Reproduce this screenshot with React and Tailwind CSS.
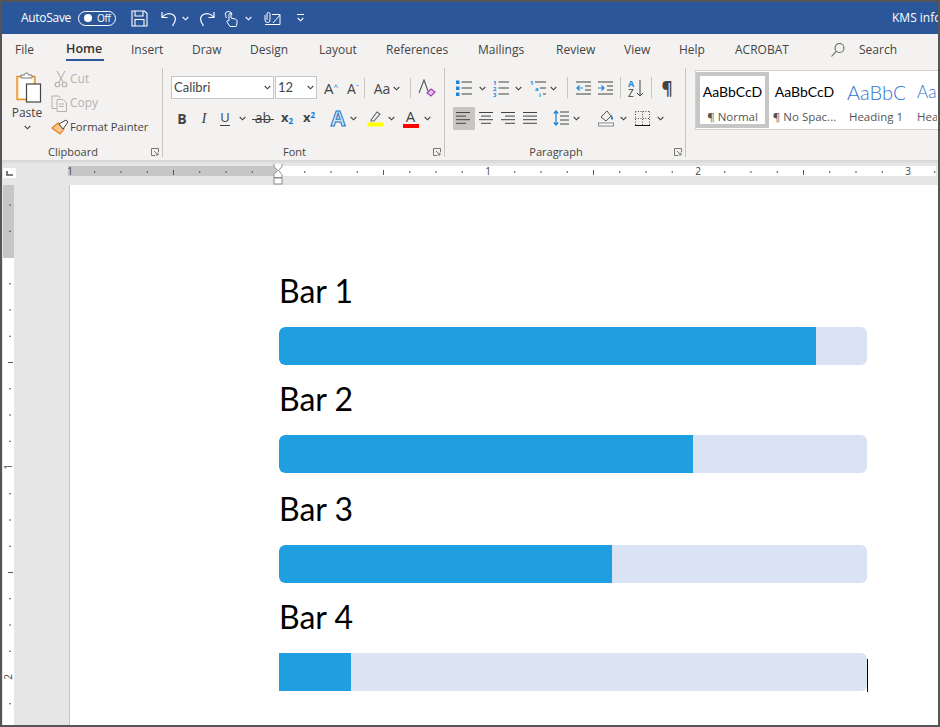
import React from 'react';

const UI = "font-['Open_Sans','Noto_Sans',sans-serif]";
const DOC = "font-['Lato','Liberation_Sans',sans-serif]";

const Chevron = ({ color = '#444', className = '' }) => (
  <svg width="7" height="5" viewBox="0 0 7 5" className={className}>
    <path d="M.7 1l2.8 2.8L6.3 1" fill="none" stroke={color} strokeWidth="1.1" />
  </svg>
);

const Sep = ({ className = 'h-[22px]' }) => <div className={`w-px shrink-0 bg-[#c8c6c4] ${className}`} />;

// fixed-width slot so that the ribbon buttons stay on the grid of the original
const Slot = ({ className = 'w-[22px]', children }) => (
  <div className={`flex h-[22px] shrink-0 items-center justify-center ${className}`}>{children}</div>
);

const TitleBar = () => (
  <div className={`flex h-[32px] shrink-0 items-center bg-[#2b579a] text-white ${UI}`}>
    <span className="ml-[19px] w-[57px] whitespace-nowrap text-[12px] tracking-[-0.3px]">AutoSave</span>
    <div className="flex h-[15px] w-[38px] items-center rounded-full border border-white pl-[5px]">
      <div className="h-[8px] w-[8px] rounded-full bg-white" />
      <span className="ml-[5px] text-[10px] leading-none tracking-[-0.3px]">Off</span>
    </div>
    <svg width="17" height="17" viewBox="0 0 17 17" className="ml-[15px]" fill="none" stroke="#fff" strokeWidth="1.1">
      <path d="M1 1h12.5L16 3.5V16H1z" /><path d="M4 1v5h8V1M4 16v-6.500h9V16" />
    </svg>
    <svg width="17" height="17" viewBox="0 0 17 17" className="ml-[13px]" fill="none" stroke="#fff" strokeWidth="1.2">
      <path d="M1 2v5.500h5.500M1.500 7C4 3.500 9 2.500 12.500 5c3 2.500 2.500 6-1 11" />
    </svg>
    <Chevron color="#fff" className="ml-[4px]" />
    <svg width="17" height="17" viewBox="0 0 17 17" className="ml-[9px]" fill="none" stroke="#fff" strokeWidth="1.2">
      <path d="M16 2v5.500h-5.500M15.500 7C13 3.500 8 2.500 4.500 5c-3 2.500-2.500 6 1 11" />
    </svg>
    <svg width="14" height="18" viewBox="0 0 14 18" className="ml-[9px]" fill="none" stroke="#fff" strokeWidth="1">
      <path d="M1 6a3.500 3.500 0 0 1 7 0M2.500 9a3 3 0 0 1-.5-3M5 11V5.500a1 1 0 0 1 2 0V9l4.500 1.200c1 .3 1.500 1 1.500 2V15l-1 2.500H6L3 13c-.5-1 .8-2 1.800-1.200z" />
    </svg>
    <Chevron color="#fff" className="ml-[7px]" />
    <svg width="17" height="15" viewBox="0 0 17 15" className="ml-[12px]" fill="none" stroke="#fff" strokeWidth="1">
      <path d="M1 13.500h15V3.500H8M9 12l7-8M3 9V3a1.500 1.500 0 0 1 3 0v6a2.500 2.500 0 0 1-5 0V4" />
    </svg>
    <div className="ml-[16px] flex flex-col items-center gap-[2px]">
      <div className="h-px w-[7px] bg-white" />
      <Chevron color="#fff" />
    </div>
    <span className="ml-auto mr-0 w-[46px] overflow-hidden whitespace-nowrap text-[12px]">KMS info</span>
  </div>
);

const tabs = [
  ['File', 'w-[51px]'],
  ['Home', 'w-[65px]'],
  ['Insert', 'w-[61px]'],
  ['Draw', 'w-[58px]'],
  ['Design', 'w-[69px]'],
  ['Layout', 'w-[67px]'],
  ['References', 'w-[92px]'],
  ['Mailings', 'w-[78px]'],
  ['Review', 'w-[68px]'],
  ['View', 'w-[55px]'],
  ['Help', 'w-[56px]'],
  ['ACROBAT', 'w-[95px]'],
];

const Tabs = () => (
  <div className={`flex h-[31px] shrink-0 bg-[#f3f2f1] pl-[13px] text-[12px] text-[#444] ${UI}`}>
    {tabs.map(([name, w]) => (
      <div key={name} className={`relative flex items-center whitespace-nowrap ${w}`}>
        {name === 'Home' ? (
          <>
            <span className="text-[12.500px] font-semibold text-[#333]">{name}</span>
            <div className="absolute bottom-[4px] left-0 h-[2px] w-[38px] bg-[#2b579a]" />
          </>
        ) : (
          name
        )}
      </div>
    ))}
    <div className="flex items-center">
      <svg width="16" height="16" viewBox="0 0 16 16" fill="none" stroke="#666" strokeWidth="1.1">
        <circle cx="9.500" cy="6" r="4.500" /><path d="M6.200 9.300L1.500 14.500" />
      </svg>
      <span className="ml-[13px]">Search</span>
    </div>
  </div>
);

const Group = ({ label, className, children }) => (
  <div className={`flex shrink-0 flex-col self-start border-r border-[#c8c6c4] ${className}`}>
    <div className="h-[74px]">{children}</div>
    <div className={`relative mt-[5px] pr-[18px] text-center text-[11px] leading-[10px] text-[#444] ${UI}`}>
      {label}
      <svg width="8" height="8" viewBox="0 0 8 8" className="absolute right-[3px] top-[1px]" fill="none" stroke="#777" strokeWidth="1">
        <path d="M7.500 4V.5H.5v7H4M3 3l4 4M7 4.500V7H4.500" />
      </svg>
    </div>
  </div>
);

const Clipboard = () => (
  <Group label="Clipboard" className="w-[161px]">
    <div className={`flex text-[12px] ${UI}`}>
      <div className="ml-[9px] flex w-[32px] flex-col items-center text-[#444]">
        <svg width="30" height="32" viewBox="0 0 30 32" className="mt-[4px]">
          <rect x="5" y="4.500" width="18" height="23" fill="#fde5b8" stroke="#e88a1a" strokeWidth="1.300" />
          <rect x="7" y="6" width="14" height="20" fill="#fff" />
          <path d="M9 6V3h3.500a2 2 0 0 1 4 0H20v3z" fill="#fff" stroke="#777" />
          <rect x="14.500" y="12" width="14" height="18" fill="#fff" stroke="#444" strokeWidth="1.200" />
        </svg>
        <span className="mt-[1px] leading-[16px]">Paste</span>
        <Chevron className="mt-[4px]" />
      </div>
      <div className="ml-[8px] -mt-px flex flex-col">
        <div className="flex h-[24px] items-center text-[#b4b2b0]">
          <svg width="16" height="18" viewBox="0 0 16 18" className="ml-[2px]" fill="none" stroke="#b4b2b0" strokeWidth="1.100">
            <path d="M4 1l6 11M12 1L6 12" /><circle cx="4.500" cy="14.500" r="2.300" /><circle cx="11.500" cy="14.500" r="2.300" />
          </svg>
          <span className="ml-px">Cut</span>
        </div>
        <div className="flex h-[24px] items-center text-[#b4b2b0]">
          <svg width="18" height="17" viewBox="0 0 18 17" fill="none" stroke="#b4b2b0" strokeWidth="1">
            <path d="M5.500 13.500H1V1h7l1.500 2M6 4.500h6l3.500 3.500v8.500H6zM8 9h5M8 11.500h5" />
          </svg>
          <span className="ml-px">Copy</span>
        </div>
        <div className="flex h-[24px] items-center whitespace-nowrap text-[#444]">
          <svg width="18" height="16" viewBox="0 0 18 16">
            <path d="M1 9l6-5 6 6-4 5z" fill="#fbc58a" stroke="#e07b1a" strokeWidth="1.200" />
            <path d="M8 5l7-4 2 2-5 7z" fill="#fff" stroke="#444" />
          </svg>
          <span className="ml-px text-[11.250px]">Format Painter</span>
        </div>
      </div>
    </div>
  </Group>
);

const FontGroup = () => (
  <Group label="Font" className="w-[282px]">
    <div className={`flex h-[31px] items-end pl-[8px] text-[#444] ${UI}`}>
      <div className="flex h-[23px] w-[103px] items-center justify-between border border-[#c8c6c4] bg-white pl-[2px] pr-[2px] text-[13px]">
        <span className={DOC}>Calibri</span><Chevron />
      </div>
      <div className="ml-px flex h-[23px] w-[42px] items-center justify-between border border-[#c8c6c4] bg-white pl-[2px] pr-[2px] text-[13px]">
        <span className={DOC}>12</span><Chevron />
      </div>
      <Slot className="ml-[3px] w-[22px]"><span className="text-[15px]">A<sup className="text-[8px] text-[#0078d4]">^</sup></span></Slot>
      <Slot className="w-[22px]"><span className="text-[14px]">A<sup className="text-[8px] text-[#0078d4]">ˇ</sup></span></Slot>
      <Sep className="mt-[8px] h-[20px] self-center" />
      <Slot className="ml-[7px] w-[30px]"><span className="text-[14px]">Aa</span><Chevron className="ml-[3px]" /></Slot>
      <Sep className="ml-[8px] mt-[8px] h-[20px] self-center" />
      <Slot className="ml-[6px] w-[20px]">
        <svg width="18" height="18" viewBox="0 0 18 18" fill="none">
          <path d="M1 14L6 1l4 11" stroke="#555" strokeWidth="1.100" />
          <path d="M9 14l4-4 4 3-4 4z" fill="#e6c6ee" stroke="#a03fb5" strokeWidth="1.200" />
        </svg>
      </Slot>
    </div>
    <div className={`mt-[7px] flex h-[24px] items-center pl-[8px] text-[#444] ${UI}`}>
      <Slot className="w-[22px]"><span className="text-[14px] font-bold">B</span></Slot>
      <Slot className="w-[22px]"><span className="font-['Liberation_Serif',serif] text-[15px] italic">I</span></Slot>
      <Slot className="w-[20px]"><span className="border-b border-[#444] text-[13px] leading-[15px]">U</span></Slot>
      <Slot className="w-[15px]"><Chevron /></Slot>
      <Slot className="w-[26px]"><span className="relative text-[14px] leading-none">ab<span className="absolute left-[-3px] right-[-3px] top-[8px] h-px bg-[#444]" /></span></Slot>
      <Slot className="w-[22px]"><span className="text-[13px] font-bold">x<sub className="text-[8px] text-[#0078d4]">2</sub></span></Slot>
      <Slot className="w-[22px]"><span className="text-[13px] font-bold">x<sup className="text-[8px] text-[#0078d4]">2</sup></span></Slot>
      <Sep className="ml-[2px]" />
      <Slot className="ml-[5px] w-[20px]">
        <span className="text-[21px] font-bold leading-none text-[#cfe5f7] [-webkit-text-stroke:1px_#1f78c8]">A</span>
      </Slot>
      <Slot className="w-[10px]"><Chevron /></Slot>
      <Slot className="ml-[8px] w-[19px]">
        <svg width="17" height="18" viewBox="0 0 17 18">
          <path d="M4 11l6-8 3 2-6 7H4z" fill="none" stroke="#666" strokeWidth="1.100" />
          <rect x="0.500" y="13.500" width="16" height="4" fill="#ffff00" />
        </svg>
      </Slot>
      <Slot className="w-[12px]"><Chevron /></Slot>
      <Slot className="ml-[5px] w-[17px]">
        <div className="flex flex-col items-center">
          <span className="text-[15px] leading-[14px]">A</span>
          <div className="mt-px h-[4px] w-[16px] bg-[#ff0000]" />
        </div>
      </Slot>
      <Slot className="w-[17px]"><Chevron /></Slot>
    </div>
  </Group>
);

const Lines = ({ rows }) => (
  <svg width="16" height="14" viewBox="0 0 16 14" stroke="#444" strokeWidth="1">
    {rows.map(([a, b], i) => <path key={i} d={`M${a} ${1.5 + i * 3.6}H${b}`} />)}
  </svg>
);

const ListIcon = ({ kind }) => (
  <svg width="17" height="18" viewBox="0 0 17 18" fontFamily="Open Sans" fontWeight="700" fontSize="6" fill="#1f84d6">
    {kind === 'bullet' && [3, 9, 15].map((y) => <rect key={y} x="0" y={y - 1.500} width="3.500" height="3.500" />)}
    {kind === 'number' && ['1', '2', '3'].map((t, i) => <text key={t} x="0" y={5.500 + i * 6}>{t}</text>)}
    {kind === 'multi' && (<>
      <text x="0" y="5.500">1</text>
      <text x="5" y="11.500">a</text>
      <text x="9" y="17.500">i</text>
    </>)}
    {kind === 'multi' ? (
      <path d="M5 3h11M10 9h6M13 15h3" stroke="#444" strokeWidth="1" />
    ) : (
      <path d="M5.500 3H16M5.500 9H16M5.500 15H16" stroke="#444" strokeWidth="1" />
    )}
  </svg>
);

const Indent = ({ dir }) => (
  <svg width="15" height="14" viewBox="0 0 15 14" fill="none">
    <path d="M0 1h15M9 5h6M9 9h6M0 13h15" stroke="#444" />
    <path d={dir === 'out' ? 'M7 7H1M3.500 4.500L1 7l2.500 2.500' : 'M0 7h6M3.500 4.500L6 7 3.500 9.500'} stroke="#1f84d6" strokeWidth="1.200" />
  </svg>
);

const Paragraph = () => (
  <Group label="Paragraph" className="w-[241px]">
    <div className={`flex h-[31px] items-end pl-[10px] ${UI}`}>
      <Slot className="w-[18px]"><ListIcon kind="bullet" /></Slot>
      <Slot className="w-[18px]"><Chevron /></Slot>
      <Slot className="ml-[2px] w-[17px]"><ListIcon kind="number" /></Slot>
      <Slot className="w-[16px]"><Chevron /></Slot>
      <Slot className="ml-[4px] w-[17px]"><ListIcon kind="multi" /></Slot>
      <Slot className="w-[12px]"><Chevron /></Slot>
      <Sep className="ml-[8px] mt-[8px] h-[21px] self-center" />
      <Slot className="ml-[8px] w-[15px]"><Indent dir="out" /></Slot>
      <Slot className="ml-[7px] w-[15px]"><Indent dir="in" /></Slot>
      <Sep className="ml-[7px] mt-[8px] h-[21px] self-center" />
      <Slot className="ml-[7px] w-[16px]">
        <svg width="16" height="19" viewBox="0 0 16 19" fill="none">
          <text x="0" y="8" fontSize="9" fontWeight="700" fill="#1f84d6" fontFamily="Open Sans">A</text>
          <text x="0" y="18" fontSize="10" fill="#444" fontFamily="Open Sans">Z</text>
          <path d="M12 1v16M9 14l3 3 3-3" stroke="#444" />
        </svg>
      </Slot>
      <Sep className="ml-[7px] mt-[8px] h-[21px] self-center" />
      <Slot className="ml-[9px] w-[12px]"><span className="text-[17px] font-bold leading-none text-[#444]">¶</span></Slot>
    </div>
    <div className={`mt-[7px] flex h-[24px] items-center pl-[8px] ${UI}`}>
      <div className="flex h-[23px] w-[22px] items-center justify-center bg-[#c8c6c4]"><Lines rows={[[0, 14], [0, 10], [0, 14], [0, 10]]} /></div>
      <Slot className="w-[22px]"><Lines rows={[[1, 15], [3, 13], [1, 15], [3, 13]]} /></Slot>
      <Slot className="w-[22px]"><Lines rows={[[1, 15], [5, 15], [1, 15], [5, 15]]} /></Slot>
      <Slot className="w-[22px]"><Lines rows={[[1, 15], [1, 15], [1, 15], [1, 15]]} /></Slot>
      <Sep className="ml-[4px]" />
      <Slot className="ml-[7px] w-[16px]">
        <svg width="16" height="16" viewBox="0 0 16 16" fill="none">
          <path d="M3 1v14M.8 3.500L3 1l2.200 2.500M.8 12.500L3 15l2.200-2.500" stroke="#1f84d6" strokeWidth="1.300" />
          <path d="M7 2h9M7 6h9M7 10h9M7 14h9" stroke="#444" />
        </svg>
      </Slot>
      <Slot className="w-[14px]"><Chevron /></Slot>
      <Sep className="ml-[7px]" />
      <Slot className="ml-[7px] w-[16px]">
        <svg width="16" height="18" viewBox="0 0 16 18" fill="none">
          <path d="M3 8l6-6 4 5-5 5z" stroke="#555" />
          <path d="M13 5.500l2 3v2h-2z" fill="#1f84d6" />
          <rect x="0.500" y="14" width="15" height="3" fill="#fff" stroke="#888" />
        </svg>
      </Slot>
      <Slot className="w-[18px]"><Chevron /></Slot>
      <Slot className="ml-[3px] w-[15px]">
        <svg width="15" height="15" viewBox="0 0 15 15" fill="none">
          <path d="M.5 .5h14M.5 7.500h14M.5 .5v14M7.500 .5v14M14.500 .5v14" stroke="#555" strokeDasharray="1 1.500" />
          <path d="M0 14.500h15" stroke="#111" />
        </svg>
      </Slot>
      <Slot className="w-[20px]"><Chevron /></Slot>
    </div>
  </Group>
);

const Styles = () => (
  <div className="ml-[9px] mt-[2px] flex h-[60px] flex-1 overflow-hidden border-y border-l border-[#d2d0ce] bg-white">
    <div className="my-px flex w-[73px] shrink-0 flex-col items-center border-4 border-[#c6c6c6] pt-[6px]">
      <span className={`text-[14px] leading-[20px] text-black ${DOC}`}>AaBbCcD</span>
      <span className={`mt-[7px] text-[11.500px] leading-[16px] text-[#555] ${UI}`}>¶ Normal</span>
    </div>
    <div className="flex w-[71px] shrink-0 flex-col items-center pt-[11px]">
      <span className={`text-[14px] leading-[20px] text-black ${DOC}`}>AaBbCcD</span>
      <span className={`mt-[7px] whitespace-nowrap text-[11.500px] leading-[16px] text-[#555] ${UI}`}>¶ No Spac...</span>
    </div>
    <div className="flex w-[72px] shrink-0 flex-col items-center pt-[9px]">
      <span className={`w-[58px] overflow-hidden whitespace-nowrap text-[20px] font-light leading-[24px] text-[#2f74d0] ${DOC}`}>AaBbCcD</span>
      <span className={`mt-[5px] text-[11.500px] leading-[16px] text-[#555] ${UI}`}>Heading 1</span>
    </div>
    <div className="flex shrink-0 flex-col pl-[5px] pt-[9px]">
      <span className={`w-[20px] overflow-hidden whitespace-nowrap text-[17px] font-light leading-[24px] text-[#2f74d0] ${DOC}`}>AaBbCc</span>
      <span className={`mt-[5px] w-[20px] overflow-hidden whitespace-nowrap text-[11.500px] leading-[16px] text-[#555] ${UI}`}>Heading 2</span>
    </div>
  </div>
);

const Ribbon = () => (
  <div className="flex h-[95px] shrink-0 bg-[#f3f2f1] pt-[3px]">
    <Clipboard />
    <FontGroup />
    <Paragraph />
    <Styles />
  </div>
);

// horizontal ruler: x=0 is the left edge of the band, zero mark at 210
const HRuler = () => {
  const ticks = [];
  for (let i = -7; i <= 25; i++) {
    if (i % 8 === 0) continue;
    const x = 210 + i * 26.25;
    ticks.push(i % 4 === 0
      ? <rect key={i} x={x} y="6" width="1" height="5" fill="#555" />
      : <rect key={i} x={x} y="7" width="1" height="2" fill="#555" />);
  }
  return (
    <svg width="868" height="21" viewBox="0 0 868 21" className="shrink-0">
      <rect x="0" y="2" width="210" height="10" fill="#c6c6c6" />
      <rect x="210" y="2" width="658" height="10" fill="#fff" />
      {ticks}
      {[[2, '1'], [420, '1'], [630, '2'], [840, '3']].map(([x, t]) => (
        <text key={x} x={x} y="11" fontSize="10" textAnchor="middle" fill="#444" fontFamily="Open Sans">{t}</text>
      ))}
      <path d="M206 0h8v3l-3.500 4 3.500 4v3h-8v-3l3.500-4L206 3z" fill="#fff" stroke="#8a8a8a" transform="translate(0 -.5)" />
      <rect x="206" y="14" width="8" height="6" fill="#fff" stroke="#8a8a8a" />
    </svg>
  );
};

const VRuler = () => {
  const ticks = [];
  for (let i = -2; i <= 17; i++) {
    if (i % 8 === 0) continue;
    const y = 72 + i * 26.25;
    ticks.push(i % 4 === 0
      ? <rect key={i} x="5" y={y} width="5" height="1" fill="#555" />
      : <rect key={i} x="6" y={y} width="2" height="1" fill="#555" />);
  }
  return (
    <svg width="11" height="540" viewBox="0 0 11 540" className="shrink-0">
      <rect x="0" y="0" width="11" height="73" fill="#c6c6c6" />
      <rect x="0" y="73" width="11" height="467" fill="#fff" />
      {ticks}
      {[[282, '1'], [492, '2']].map(([y, t]) => (
        <text key={y} x="0" y="0" fontSize="10" textAnchor="middle" fill="#444" fontFamily="Open Sans" transform={`translate(9 ${y}) rotate(-90)`}>{t}</text>
      ))}
    </svg>
  );
};

const bars = [
  { name: 'Bar 1', pct: 91.3, track: 'bg-[#d9e3f3]', cls: 'mt-[86px]', fill: 'rounded-l-[6px]' },
  { name: 'Bar 2', pct: 70.4, track: 'bg-[#d9e3f3]', cls: 'mt-[14px]', fill: 'rounded-l-[6px]' },
  { name: 'Bar 3', pct: 56.6, track: 'bg-[#d9e3f3]', cls: 'mt-[16px]', fill: 'rounded-l-[6px]' },
  { name: 'Bar 4', pct: 12.2, track: 'bg-[#dbe5f1]', cls: 'mt-[14px]', fill: '' },
];

const Page = () => (
  <div className={`flex-1 overflow-hidden border-l border-[#c6c6c6] bg-white pl-[209px] ${DOC}`}>
    {bars.map((b, i) => (
      <div key={b.name} className={b.cls}>
        <div className="h-[42px] text-[32px] leading-[40px] text-black">{b.name}</div>
        <div className="relative mt-[14px] w-[588px]">
          <div className={`h-[38px] overflow-hidden rounded-[6px] ${b.track} ${i === 3 ? 'rounded-l-none' : ''}`}>
            <div className={`h-full bg-[#1f9fe0] ${b.fill}`} style={{ width: `${b.pct}%` }} />
          </div>
          {i === 3 && <div className="absolute right-[-1px] top-[6px] h-[33px] w-px bg-black" />}
        </div>
      </div>
    ))}
  </div>
);

export default function App() {
  return (
    <div className="flex h-[727px] w-[940px] flex-col overflow-hidden border-2 border-[#555]">
      <TitleBar />
      <Tabs />
      <Ribbon />
      <div className="h-[4px] shrink-0 bg-gradient-to-b from-[#d4d4d4] to-[#e6e6e6]" />
      <div className="flex h-[21px] shrink-0 bg-[#e6e6e6]">
        <div className="h-[17px] w-[66px] shrink-0">
          <div className="ml-px mt-[4px] flex h-[10px] w-[13px] items-center justify-center bg-white">
            <svg width="7" height="5" viewBox="0 0 7 5"><path d="M1 0v4h6" fill="none" stroke="#555" strokeWidth="1.600" /></svg>
          </div>
        </div>
        <HRuler />
      </div>
      <div className="flex min-h-0 flex-1 bg-[#e6e6e6]">
        <div className="w-[67px] shrink-0 overflow-hidden pl-[1px]"><VRuler /></div>
        <Page />
      </div>
    </div>
  );
}
